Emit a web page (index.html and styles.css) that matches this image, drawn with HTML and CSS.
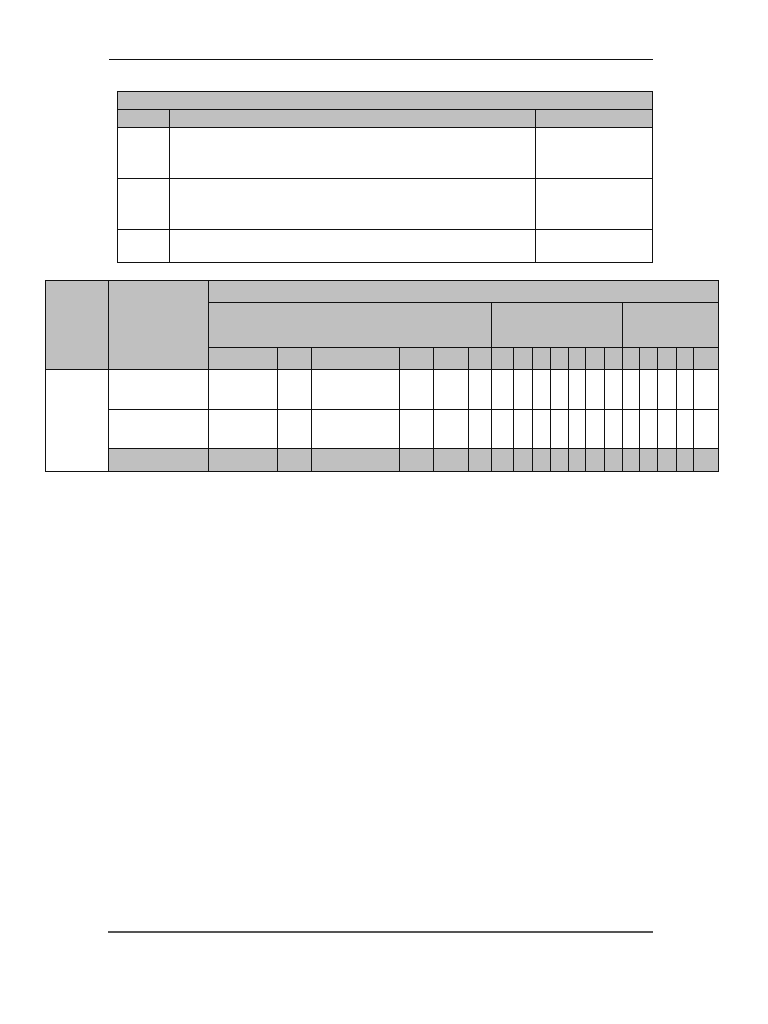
FILE: index.html
```html
<!DOCTYPE html>
<html>
<head>
<meta charset="utf-8">
<link rel="stylesheet" href="styles.css">
</head>
<body>
<div class="page">
  <hr class="rule rule-top">
  <table class="t1">
    <colgroup><col class="c52"><col class="c366"><col class="c117"></colgroup>
    <tr class="h18"><td class="g" colspan="3"></td></tr>
    <tr class="h18"><td class="g"></td><td class="g"></td><td class="g"></td></tr>
    <tr class="h51"><td></td><td></td><td></td></tr>
    <tr class="h51"><td></td><td></td><td></td></tr>
    <tr class="h33"><td></td><td></td><td></td></tr>
  </table>
  <table class="t2">
    <colgroup>
      <col class="w63"><col class="w100">
      <col class="w69"><col class="w34"><col class="w88"><col class="w34"><col class="w35"><col class="w23">
      <col class="w22"><col class="w19"><col class="w18"><col class="w18"><col class="w17"><col class="w19"><col class="w18">
      <col class="w17"><col class="w18"><col class="w19"><col class="w17"><col class="w25">
    </colgroup>
    <tr class="h22"><td class="g" rowspan="3"></td><td class="g" rowspan="3"></td><td class="g" colspan="18"></td></tr>
    <tr class="h45"><td class="g" colspan="6"></td><td class="g" colspan="7"></td><td class="g" colspan="5"></td></tr>
    <tr class="h22 grow">
      <td></td><td></td><td></td><td></td><td></td><td></td>
      <td></td><td></td><td></td><td></td><td></td><td></td><td></td>
      <td></td><td></td><td></td><td></td><td></td>
    </tr>
    <tr class="h40"><td rowspan="3"></td><td></td>
      <td></td><td></td><td></td><td></td><td></td><td></td>
      <td></td><td></td><td></td><td></td><td></td><td></td><td></td>
      <td></td><td></td><td></td><td></td><td></td>
    </tr>
    <tr class="h39"><td></td>
      <td></td><td></td><td></td><td></td><td></td><td></td>
      <td></td><td></td><td></td><td></td><td></td><td></td><td></td>
      <td></td><td></td><td></td><td></td><td></td>
    </tr>
    <tr class="h23 grow"><td></td>
      <td></td><td></td><td></td><td></td><td></td><td></td>
      <td></td><td></td><td></td><td></td><td></td><td></td><td></td>
      <td></td><td></td><td></td><td></td><td></td>
    </tr>
  </table>
  <hr class="rule rule-bottom">
</div>
</body>
</html>
```

FILE: styles.css
```css
html, body {
  margin: 0;
  padding: 0;
  background: #ffffff;
  font-family: "Liberation Sans", Arial, sans-serif;
}

.page {
  width: 768px;
  height: 1024px;
  overflow: hidden;
  padding-top: 59px;
  box-sizing: border-box;
}

.rule {
  border: 0;
  margin: 0;
  padding: 0;
  height: 0;
}

.rule-top {
  margin-left: 109px;
  width: 544px;
  border-top: 1px solid #111;
}

.rule-bottom {
  margin-left: 108px;
  width: 545px;
  margin-top: 459px;
  border-top: 2px solid #555;
}

table {
  border-collapse: collapse;
  table-layout: fixed;
}

td {
  border: 1px solid #111;
  padding: 0;
  background: #ffffff;
}

td.g,
tr.grow td {
  background: #c0c0c0;
}

.t1 {
  margin-left: 117px;
  margin-top: 31px;
  width: 535px;
}

.t1 .c52 { width: 52px; }
.t1 .c366 { width: 366px; }
.t1 .c117 { width: 117px; }

.t2 {
  margin-left: 45px;
  margin-top: 17px;
  width: 673px;
}

.w63 { width: 63px; }
.w100 { width: 100px; }
.w69 { width: 69px; }
.w88 { width: 88px; }
.w35 { width: 35px; }
.w34 { width: 34px; }
.w25 { width: 25px; }
.w23 { width: 23px; }
.w22 { width: 22px; }
.w19 { width: 19px; }
.w18 { width: 18px; }
.w17 { width: 17px; }

.h18 td { height: 17px; }
.h51 td { height: 50px; }
.h33 td { height: 32px; }
.h22 > td { height: 21px; }
.h45 > td { height: 44px; }
.h40 > td { height: 39px; }
.h39 > td { height: 38px; }
.h23 > td { height: 22px; }
.t2 tr.h40 > td[rowspan] { height: auto; }
.t2 tr.h22 > td[rowspan] { height: auto; }
```
